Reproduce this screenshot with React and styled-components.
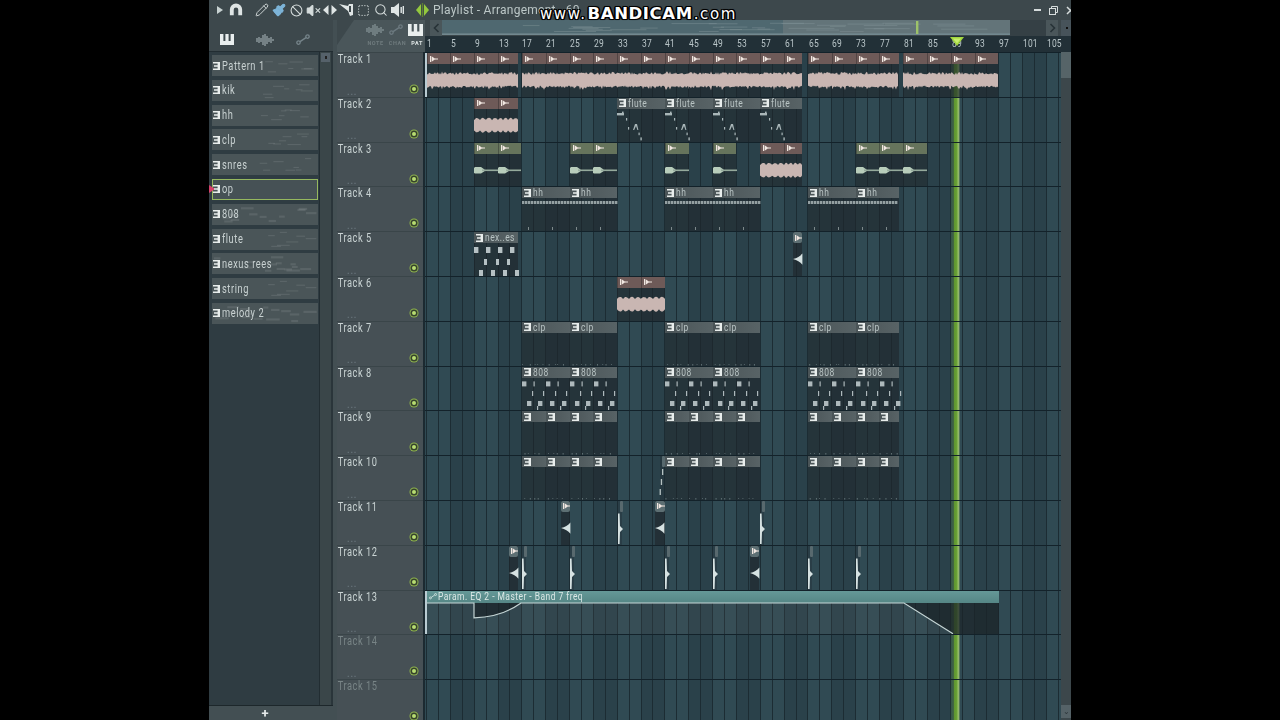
import React from "react";
import styled, { createGlobalStyle, css } from "styled-components";
import { Pencil, Paintbrush, Ban, VolumeX, SquareDashed, Search } from "lucide-react";

/* FL Studio's UI face is tall and narrow: Roboto squeezed horizontally */
const squeezed = css`
  font-family: Roboto, sans-serif;
  display: inline-block;
  white-space: nowrap;
  transform: scaleX(0.77);
  transform-origin: left center;
`;

const Global = createGlobalStyle`
  html, body { margin: 0; padding: 0; background: #000; }
  body { font-family: Roboto, "Liberation Sans", sans-serif; }
`;

const Stage = styled.div`
  position: relative; width: 1280px; height: 720px; background: #000;
  display: flex; justify-content: center; overflow: hidden;
`;
const Win = styled.div`
  width: 862px; height: 720px; background: #434f53; display: flex; flex-direction: column;
  overflow: hidden; filter: blur(0.35px); color: #c6d0d1;
`;
const TitleBar = styled.div`
  height: 20px; flex: none; display: flex; align-items: center; padding-left: 3px; background: #3d484c;
`;
const ToolSlot = styled.div`
  width: ${p => p.$w || 16.9}px; height: 20px; flex: none; display: flex; align-items: center; justify-content: center;
  margin-left: ${p => p.$ml || 0}px; color: ${p => p.$c || "#d5dcdc"};
`;
const Title = styled.div`
  margin-left: 3px; font-size: 12px; letter-spacing: 0.25px; color: #bcc7c7; white-space: nowrap; flex: 1;
`;
const WinBtns = styled.div`
  width: 41px; display: flex; align-items: center; justify-content: space-between; margin-right: -4px; color: #d6dcdc;
`;
const Main = styled.div`
  flex: 1; display: flex; min-height: 0;
`;

/* Picker */
const Picker = styled.div`
  width: 124px; flex: none; display: flex; flex-direction: column;
`;
const PickerTools = styled.div`
  height: 32px; flex: none; background: #3d484c; display: flex; align-items: center; gap: 22px;
  padding: 9px 0 0 11px; box-sizing: border-box; border-bottom: 1px solid #222d32;
`;
const PickerBody = styled.div`
  height: 653px; flex: none; display: flex; background: #2f3c42; border-bottom: 1px solid #1d272b;
`;
const PatList = styled.div`
  width: 111px; flex: none; padding: 3px 0 0 3px; box-sizing: border-box; display: flex; flex-direction: column; gap: 3.8px;
  border-right: 1px solid #222d32;
`;
const PatScroll = styled.div`
  flex: 1; background: #3a4649; border-right: 2px solid #2a353a; padding: 1px;
`;
const PatScrollBtn = styled.div`
  height: 9px; width: 9px; background: #55616a; display: flex; align-items: center; justify-content: center;
  &::after { content: ""; width: 2px; height: 3px; background: #222; }
`;
const PatItem = styled.div`
  position: relative; width: 106px; height: 21px; box-sizing: border-box; background: #4a5558;
  display: flex; align-items: center; gap: 2px;
  font-size: 12px; letter-spacing: 0.75px; color: #c9d2d2;
  border: 1px solid ${p => (p.$sel ? "#96b85f" : "transparent")};
  ${p => p.$sel && "background: #465155;"}
`;
const PatArt = styled.svg`
  position: absolute; inset: 0; width: 100%; height: 100%;
`;
const PatLabel = styled.span`
  position: relative; ${squeezed}
`;
const SelMark = styled.div`
  position: absolute; left: -4px; top: 5px; width: 0; height: 0;
  border-left: 6px solid #d6406a; border-top: 4px solid transparent; border-bottom: 4px solid transparent;
`;
const PickerFoot = styled.div`
  flex: 1; padding-right: 12px; display: flex; align-items: center; justify-content: center;
  color: #e4e9e9; font-size: 13px; font-weight: 700; line-height: 1;
`;
const Gap = styled.div`
  width: 4px; flex: none; background: #434f53;
`;

/* Right side */
const Right = styled.div`
  flex: 1; display: flex; flex-direction: column; min-width: 0;
`;
const TopBand = styled.div`
  height: 32px; flex: none; display: flex; background: #3d484c;
`;
const Tab = styled.div`
  width: 88px; flex: none; background: #4a565a; clip-path: polygon(0 100%, 0 78%, 17px 0, 100% 0, 100% 100%);
  display: flex; flex-direction: column; align-items: flex-end; padding: 2px 2px 0 0; box-sizing: border-box;
`;
const TabIcons = styled.div`
  display: flex; align-items: center; gap: 5px; height: 13px; padding-top: 1px;
`;
const TabLabels = styled.div`
  display: flex; gap: 5px; margin-top: 4px; font-size: 5.5px; font-weight: 700; letter-spacing: 0.6px; color: #6f7b7e; line-height: 7px;
`;
const TabOn = styled.span`
  color: #dfe6e6;
`;
const TopRight = styled.div`
  flex: 1; display: flex; flex-direction: column; min-width: 0;
`;
const MiniRow = styled.div`
  height: 16px; flex: none; display: flex; align-items: stretch; padding-left: 5px; background: #3c474b;
`;
const MiniBtn = styled.div`
  width: 12px; flex: none; background: #4a565a; color: #273237; display: flex; align-items: center; justify-content: center;
`;
const MiniBar = styled.svg`
  width: 568px; height: 15px; flex: none; display: block;
`;
const MiniSpace = styled.div`
  width: 36px; flex: none; background: #354045;
`;
const MiniEnd = styled.div`
  width: 11px; flex: none; margin-left: 3px; background: #47535a;
  display: flex; align-items: center; justify-content: center;
  &::after { content: ""; width: 2px; height: 2px; background: #111; }
`;
const RulerRow = styled.div`
  height: 16px; flex: none; display: flex; background: #223037;
`;
const Ruler = styled.div`
  flex: 1; display: flex; padding-left: 2px;
`;
const RulerNum = styled.div`
  ${squeezed}
  width: 23.85px; flex: none; font-size: 11px; line-height: 16px; color: #b9c5c8; letter-spacing: 0.2px;
`;
const RulerEnd = styled.div`
  width: 11px; flex: none; background: #4b585c;
`;
const PlayMark = styled.svg`
  position: absolute; left: 950px; top: 37px; width: 14px; height: 9px;
`;

const Body = styled.div`
  flex: 1; display: flex; min-height: 0;
`;
const HeadCol = styled.div`
  width: 86px; flex: none; overflow: hidden;
`;
const Divider = styled.div`
  width: 2px; flex: none; background: #1c2a31;
`;
const TrackHead = styled.div`
  height: 44.8px; box-sizing: border-box; border-top: 1px solid #3a4549; background: #465055;
  display: flex; flex-direction: column; justify-content: space-between; align-items: stretch;
`;
const TrackName = styled.div`
  ${squeezed}
  font-size: 12px; letter-spacing: 0.7px; line-height: 12px; padding-left: 1px; color: ${p => (p.$dim ? "#788486" : "#c9d3d3")};
`;
const TrackFoot = styled.div`
  display: flex; align-items: center; justify-content: space-between; padding: 0 7px 1.3px 10px;
`;
const Dots = styled.div`
  color: #67737a; font-size: 9px; font-weight: 700; letter-spacing: 0.8px; line-height: 8px; padding-top: 5px;
`;
const Led = styled.div`
  width: 4px; height: 4px; border-radius: 50%; background: #b7dc72; box-shadow: 0 0 0 1.5px #36432c, 0 0 0 2.5px #8fb34e;
`;
const LanesWrap = styled.div`
  position: relative; width: 636px; flex: none; overflow: hidden;
  background-color: #2e474f;
  background-image:
    repeating-linear-gradient(90deg, #1c2c33 0 1px, transparent 1px 11.92px),
    repeating-linear-gradient(90deg, #304a53 0 23.84px, #2a414a 23.84px 47.68px);
  background-position: 1px 0;
`;
const Lane = styled.div`
  position: relative; height: 44.8px; box-sizing: border-box; border-top: 1px solid #13222a;
`;
const Playhead = styled.div`
  position: absolute; left: 525px; top: 0; bottom: 0; width: 10px;
  background: linear-gradient(90deg, rgba(80,120,50,0) 0, rgba(80,125,50,.55) 35%, #5e9430 42%, #6aa236 70%, #a3c873 82%, rgba(120,170,80,.15) 100%);
`;
const StartBar = styled.div`
  position: absolute; left: 0; top: 0; bottom: 0; width: 2px; background: #b9cbd2;
`;
const Clip = styled.div`
  position: absolute; top: 0; bottom: 0; display: flex; flex-direction: column;
  background: ${p => (p.$stub ? "rgba(30,38,44,.3)" : "rgba(30,38,44,.62)")};
`;
const HEADS = { pink: "#6e5a58", green: "#66745c", grey: "#4e585b", tick: "#5d6f73", stub: "#58696e" };
const ClipHead = styled.div`
  height: 11px; flex: none; display: flex; align-items: center; gap: 2px; overflow: hidden;
  padding-left: ${p => (p.$k === "stub" ? 0 : 2)}px; font-size: 11px; letter-spacing: 0.6px; color: #b8c3c3;
  background: ${p => HEADS[p.$k]};
  ${p => p.$k === "grey" && "background: linear-gradient(90deg,#4a5457,#586366);"}
  ${p => (p.$k === "pink" || p.$k === "green") && "border-left: 1px solid rgba(30,30,30,.35);"}
  ${p => p.$k === "tick" && "border-radius: 2px;"}
  ${p => p.$k === "stub" && "width: 3px; margin-left: 2px; border-radius: 1px;"}
`;
const ClipName = styled.span`
  ${squeezed}
`;
const ClipBody = styled.svg`
  flex: 1; min-height: 0; width: 100%; display: block; overflow: visible;
`;
const AutoClip = styled.div`
  position: absolute; top: 0; bottom: 0; left: 2px; width: 572px; display: flex; flex-direction: column;
`;
const AutoHead = styled.div`
  height: 12px; flex: none; display: flex; align-items: center; gap: 1px; padding-left: 2px;
  font-size: 11px; letter-spacing: 0.6px; color: #dbe8e6;
  background: linear-gradient(180deg, #659897, #558685);
`;
const VScroll = styled.div`
  flex: 1; background: #3c474b; display: flex; flex-direction: column; justify-content: space-between;
`;
const VThumb = styled.div`
  height: 26px; background: #566468;
`;
const VBtn = styled.div`
  height: 13px; margin-bottom: 2px; background: #556267; color: #2c363a; font-size: 8px; line-height: 13px; text-align: center;
`;

const Watermark = styled.div`
  position: absolute; left: 540px; top: 4px; display: flex; align-items: baseline; white-space: nowrap;
  font-family: "DejaVu Sans", sans-serif; color: #fff; line-height: 20px;
  text-shadow: -1px -1px 0 #000, 1px -1px 0 #000, -1px 1px 0 #000, 1px 1px 0 #000, 0 0 2px #000, 1.5px 0 0 #000, -1.5px 0 0 #000;
`;
const WmSmall = styled.span`
  font-size: 15px; font-weight: 400; letter-spacing: 1.6px;
`;
const WmBig = styled.span`
  font-size: 16.5px; font-weight: 700; letter-spacing: 0.6px; margin: 0 1px;
`;

/* ---------- drawings ---------- */
const Piano = ({ s = 14, c = "#e9eeee" }) => (
  <svg width={s} height={s * 0.8} viewBox="0 0 14 11"><path fill={c} d="M0 0h3.4v7h2V0h3.2v7h2V0H14v11H0z" /></svg>
);
const WaveIcon = ({ c = "#8e9b9e" }) => (
  <svg width="18" height="12" viewBox="0 0 18 12" stroke={c} strokeWidth="1.4">
    {[[1, 2], [3, 3], [5, 2], [7, 5], [9, 6], [11, 4], [13, 2], [15, 3], [17, 1]].map(([x, h]) => (
      <line key={x} x1={x} x2={x} y1={6 - h} y2={6 + h} />
    ))}
  </svg>
);
const AutoIcon = ({ c = "#76848a", s = 14 }) => (
  <svg width={s} height={s * 0.8} viewBox="0 0 14 11" fill="none" stroke={c} strokeWidth="1.3" style={{ flex: "none" }}>
    <circle cx="2.5" cy="8.5" r="1.7" /><circle cx="11.5" cy="2.5" r="1.7" /><line x1="4" y1="7.5" x2="10" y2="3.5" />
  </svg>
);
const PatGlyph = ({ c = "#e8edec" }) => (
  <svg width="7" height="8" viewBox="0 0 7 8" style={{ flex: "none", position: "relative" }}><path fill={c} d="M0 0h7v8H0V6.4h4.6V4.8H1V3.2h3.6V1.6H0z" /></svg>
);
const AudioGlyph = () => (
  <svg width="8" height="6" viewBox="0 0 8 6" fill="#f0e6e0" style={{ flex: "none" }}><rect x="0" y="0" width="1.1" height="6" /><path d="M1.6 0.3 5.6 3 1.6 5.7z" /><rect x="5" y="2.5" width="3" height="1" /></svg>
);
const Magnet = () => (
  <svg width="14" height="14" viewBox="0 0 16 16" fill="#dfe5e5"><path d="M1 14V7.5a7 7 0 0 1 14 0V14h-4.4V7.6a2.6 2.6 0 0 0-5.2 0V14z" /></svg>
);
const Slip = () => (
  <svg width="14" height="10" viewBox="0 0 14 10" fill="#dfe5e5"><path d="M0 5 5.5 0v10zM14 5 8.5 0v10z" /><rect x="6.3" y="0" width="1.4" height="10" fill="#3d484c" /></svg>
);
const Slice = () => (
  <svg width="15" height="14" viewBox="0 0 15 14" fill="#dfe5e5"><path d="M0 1 9 3 10 1h4v11l-3 1-2-5z" /><rect x="10" y="3" width="2" height="6" fill="#3d484c" /></svg>
);
const Speaker = () => (
  <svg width="13" height="14" viewBox="0 0 13 14" fill="#dfe5e5"><path d="M0 4h3l5-4v14l-5-4H0z" /><rect x="9.5" y="4" width="1.4" height="6" /><rect x="11.6" y="3" width="1.4" height="8" /></svg>
);
const TitleIcon = () => (
  <svg width="13" height="14" viewBox="0 0 13 14" fill="#93c83e"><path d="M5 1v12L0 7z" /><path d="M8 1v12l5-6z" /><rect x="5.8" y="0" width="1.4" height="14" fill="#5d7f33" /></svg>
);
const Chevron = ({ dir }) => (
  <svg width="7" height="10" viewBox="0 0 7 10" fill="none" stroke="currentColor" strokeWidth="1.6">
    <path d={dir === "l" ? "M5.5 1 1.5 5l4 4" : "M1.5 1l4 4-4 4"} />
  </svg>
);
const WinIcons = () => (
  <WinBtns>
    <svg width="7" height="3" viewBox="0 0 7 3" fill="currentColor"><rect width="7" height="2" /></svg>
    <svg width="9" height="9" viewBox="0 0 9 9" fill="none" stroke="currentColor"><rect x="0.5" y="2.5" width="6" height="6" /><path d="M2.5 2.5v-2h6v6h-2" /></svg>
    <svg width="9" height="9" viewBox="0 0 9 9" stroke="currentColor" strokeWidth="1.5"><path d="M1 1l7 7M8 1 1 8" /></svg>
  </WinBtns>
);

function rng(seed) {
  let s = seed * 9301 + 49297;
  return () => {
    s = (s * 9301 + 49297) % 233280;
    return s / 233280;
  };
}

const Wave = ({ w, seed, cy = 16.2, amp = 7.5, c = "#c9b6b2" }) => {
  const r = rng(seed);
  const top = [];
  const bot = [];
  for (let x = 0; x <= w; x += 1) {
    const big = r() < 0.1 ? 2.4 : 0;
    top.push(`${x},${(cy - amp * (0.72 + r() * 0.34) - big * 0.4).toFixed(1)}`);
    bot.unshift(`${x},${(cy + amp * (0.72 + r() * 0.3) + big).toFixed(1)}`);
  }
  return <polygon fill={c} points={[...top, ...bot].join(" ")} />;
};
const Blobby = ({ w, seed, cy = 16.2, c = "#c9b6b2" }) => {
  const r = rng(seed);
  const top = [];
  const bot = [];
  for (let x = 0; x <= w; x += 1) {
    const a = 5 + 2 * Math.abs(Math.sin((x / w) * Math.PI * 2 * Math.max(1, Math.round(w / 12)))) + r() * 0.6;
    top.push(`${x},${(cy - a).toFixed(1)}`);
    bot.unshift(`${x},${(cy + a).toFixed(1)}`);
  }
  return <polygon fill={c} points={[...top, ...bot].join(" ")} />;
};
const Shot = ({ w }) => (
  <g>
    <polygon fill="#b8cdbb" points="0,14 1,13 7,13 10.5,15.4 10.5,17.2 7,19.4 1,19.6 0,19" />
    <rect x="8" y="15.5" width={w - 8} height="1.6" fill="#95aa9c" />
  </g>
);
const HhArt = ({ w }) => (
  <g fill="#94a0a2">
    {Array.from({ length: Math.floor(w / 3) }, (_, i) => <rect key={i} x={i * 3} y="3" width="2.4" height="3" />)}
    <rect x="6" y="29" width="1" height="3" fill="#7d898b" />
    <rect x="30" y="29" width="1" height="3" fill="#7d898b" />
  </g>
);
const NexArt = () => (
  <g fill="#b6c1c4">
    {[0, 12, 24, 36].map(x => <rect key={x} x={x} y="4" width="4.4" height="6" />)}
    {[10, 22, 33].map(x => <rect key={x} x={x} y="16" width="3" height="6" />)}
    {[5, 17, 29, 41].map(x => <rect key={x} x={x} y="27" width="4" height="6" />)}
  </g>
);
const Art808 = () => (
  <g fill="#aeb9bc">
    {[0, 24].map(x => <rect key={x} x={x} y="3.4" width="4.4" height="5" />)}
    {[11.5, 35.5].map(x => <rect key={x} x={x} y="3.4" width="1.2" height="5" />)}
    {[10, 21, 33, 44].map(x => <rect key={x} x={x} y="13" width="1.2" height="5" />)}
    {[5, 16, 28, 40].map(x => <rect key={x} x={x} y="23" width="4.4" height="5" />)}
    {[15, 38].map(x => <rect key={x} x={x} y="28" width="1.2" height="4" />)}
  </g>
);
const SparseTicks = ({ w, seed }) => {
  const r = rng(seed);
  return (
    <g fill="#65767a">
      {Array.from({ length: Math.floor(w / 5) }, (_, i) => (
        <rect key={i} x={i * 5 + r() * 3} y="31" width="0.9" height={r() > 0.5 ? 1.6 : 0.8} />
      ))}
    </g>
  );
};
const FluteArt = () => (
  <g fill="#a9b6b8">
    <rect x="0" y="4" width="7" height="2.4" />
    <rect x="5" y="2.6" width="1.6" height="3" />
    <rect x="9" y="9" width="1.2" height="2.6" />
    <rect x="11" y="18" width="1.2" height="2.6" />
    <path d="M16 21 18 15 20 15 21.4 21h-1L19 17l-1.8 4z" />
    <rect x="21.5" y="23.6" width="1.2" height="2.6" />
    <rect x="23.4" y="28.4" width="1.4" height="3" />
  </g>
);
const TriArt = () => <path d="M0 16 Q6 14.5 9.4 10.4V21.8Q6 17.5 0 16z" fill="#d6e2e2" />;
const SpikeArt = () => (
  <path d="M0 1.4 1.6 1.4 2 14 5 17 2 20 1.6 32 0 32z" fill="#d6e2e2" />
);
const DashArt = () => (
  <g fill="#b6c2c2">
    {[2, 12, 22].map((y, i) => <rect key={y} x={2 - i * 1.2} y={y} width="1.3" height="6" />)}
  </g>
);

const U = 5.96;
const bx = b => 1.5 + U * (b - 1);
const c = (kind, from, span, extra = {}) => ({ kind, from, span, ...extra });
const eightBars = (name, art) =>
  [17, 25, 41, 49, 65, 73].map(b => c("grey", b, b === 73 ? 7.3 : 8, { name, art }));
const fourBars = art =>
  [17, 21, 25, 29, 41, 45, 49, 53, 65, 69, 73, 77].map(b => c("grey", b, b === 77 ? 3.3 : 4, { art }));

const t1 = [];
[[1, 13, 3.4], [17, 61, 3], [65, 77, 3.2], [81, 93, 3.9]].forEach(([a, z, last]) => {
  for (let b = a; b <= z; b += 4) t1.push(c("pink", b, b === z ? last : 4, { art: "wave" }));
});

const TRACKS = [
  t1,
  [c("pink", 9, 4, { art: "blob" }), c("pink", 13, 3.4, { art: "blob" }),
    ...[33, 41, 49, 57].map(b => c("grey", b, b === 57 ? 7 : 8, { name: "flute", art: "flute" }))],
  [c("green", 9, 4, { art: "shot" }), c("green", 13, 3.9, { art: "shot" }),
    c("green", 25, 4, { art: "shot" }), c("green", 29, 4, { art: "shot" }),
    c("green", 41, 4, { art: "shot" }), c("green", 49, 4, { art: "shot" }),
    c("pink", 57, 4, { art: "blob" }), c("pink", 61, 3, { art: "blob" }),
    c("green", 73, 4, { art: "shot" }), c("green", 77, 4, { art: "shot" }), c("green", 81, 4, { art: "shot" })],
  eightBars("hh", "hh"),
  [c("grey", 9, 7.4, { name: "nex..es", art: "nex" }), c("tick", 62.5, 1.5, { art: "tri" })],
  [c("pink", 33, 4, { art: "blob" }), c("pink", 37, 4, { art: "blob" })],
  eightBars("clp", "ticks"),
  eightBars("808", "808"),
  fourBars("ticks"),
  [...fourBars("ticks"), c("stub", 40.2, 0.7, { art: "dash" })],
  [c("tick", 23.5, 1.55, { art: "tri" }), c("stub", 33.1, 0.7, { art: "spike" }), c("tick", 39.4, 1.6, { art: "tri" }), c("stub", 57, 0.7, { art: "spike" })],
  [c("tick", 14.8, 1.6, { art: "tri" }), c("stub", 17, 0.7, { art: "spike" }), c("stub", 25, 0.7, { art: "spike" }),
    c("stub", 41, 0.7, { art: "spike" }), c("stub", 49, 0.7, { art: "spike" }), c("tick", 55.2, 1.6, { art: "tri" }),
    c("stub", 65, 0.7, { art: "spike" }), c("stub", 73, 0.7, { art: "spike" })],
];

function renderArt(art, w, seed) {
  switch (art) {
    case "wave": return <Wave w={w} seed={seed} />;
    case "blob": return <Blobby w={w} seed={seed} />;
    case "shot": return <Shot w={w} />;
    case "hh": return <HhArt w={w} />;
    case "nex": return <NexArt />;
    case "808": return <Art808 />;
    case "ticks": return <SparseTicks w={w} seed={seed} />;
    case "flute": return <FluteArt />;
    case "tri": return <TriArt />;
    case "spike": return <SpikeArt />;
    case "dash": return <DashArt />;
    default: return null;
  }
}

const PlacedClip = ({ clip, seed }) => {
  const w = clip.span * U;
  const { kind, name, art } = clip;
  return (
    <Clip $stub={kind === "stub"} style={{ left: bx(clip.from), width: w }}>
      <ClipHead $k={kind}>
        {kind === "grey" && <PatGlyph />}
        {(kind === "pink" || kind === "green" || kind === "tick") && <AudioGlyph />}
        {name && <ClipName>{name}</ClipName>}
      </ClipHead>
      <ClipBody>{renderArt(art, Math.round(w), seed)}</ClipBody>
    </Clip>
  );
};

const PATTERNS = [
  { n: "Pattern 1", seed: 3 }, { n: "kik", seed: 5 }, { n: "hh", seed: 7 }, { n: "clp", seed: 11 },
  { n: "snres", seed: 13 }, { n: "op", seed: 0, sel: true }, { n: "808", seed: 17, rich: true },
  { n: "flute", seed: 19 }, { n: "nexus rees", seed: 23, rich: true }, { n: "string", seed: 19 }, { n: "melody 2", seed: 31, rich: true },
];

const MiniArt = ({ seed, rich }) => {
  if (!seed) return null;
  const r = rng(seed);
  const n = rich ? 14 : 7;
  return (
    <PatArt viewBox="0 0 106 21" preserveAspectRatio="none">
      {Array.from({ length: n }, (_, i) => (
        <rect key={i} x={(rich ? 0 : 45) + r() * (rich ? 95 : 50)} y={2 + r() * 16} width={5 + r() * 9} height={rich ? 2.4 : 1.2} fill="#fff" opacity={rich ? 0.09 : 0.1} />
      ))}
    </PatArt>
  );
};

const MiniMap = () => {
  const r = rng(41);
  return (
    <MiniBar viewBox="0 0 568 15">
      <rect width="341" height="15" fill="#4f6870" />
      <rect x="341" width="227" height="15" fill="#637479" />
      <rect y="13.4" width="568" height="1.6" fill="#72888f" />
      {Array.from({ length: 34 }, (_, i) => (
        <rect key={i} x={r() * 480 + 20} y={2 + r() * 10} width={10 + r() * 40} height="1" fill="#83959a" opacity="0.45" />
      ))}
      <rect x="474" y="1" width="2.4" height="13" fill="#9dc26a" />
    </MiniBar>
  );
};

export default function App() {
  const nums = [];
  for (let n = 1; n <= 105; n += 4) nums.push(n);
  const rows = [...TRACKS, [], [], []];
  return (
    <Stage>
      <Global />
      <Win>
        <TitleBar>
          <ToolSlot $w={16}><svg width="6" height="8" viewBox="0 0 6 8" fill="#c8d2d2"><path d="M0 0l6 4-6 4z" /></svg></ToolSlot>
          <ToolSlot $w={16}><Magnet /></ToolSlot>
          <ToolSlot $ml={10}><Pencil size={14} strokeWidth={1.6} /></ToolSlot>
          <ToolSlot $c="#7db4d8"><Paintbrush size={14} strokeWidth={1.8} fill="#7db4d8" /></ToolSlot>
          <ToolSlot><Ban size={13} strokeWidth={2} /></ToolSlot>
          <ToolSlot><VolumeX size={15} strokeWidth={1.8} fill="#d5dcdc" /></ToolSlot>
          <ToolSlot><Slip /></ToolSlot>
          <ToolSlot><Slice /></ToolSlot>
          <ToolSlot><SquareDashed size={13} strokeWidth={1.6} /></ToolSlot>
          <ToolSlot><Search size={14} strokeWidth={1.8} /></ToolSlot>
          <ToolSlot><Speaker /></ToolSlot>
          <ToolSlot $ml={8} $w={16}><TitleIcon /></ToolSlot>
          <Title>Playlist - Arrangement - 60</Title>
          <WinIcons />
        </TitleBar>
        <Main>
          <Picker>
            <PickerTools>
              <Piano />
              <WaveIcon />
              <AutoIcon />
            </PickerTools>
            <PickerBody>
              <PatList>
                {PATTERNS.map(p => (
                  <PatItem key={p.n} $sel={p.sel}>
                    <MiniArt seed={p.seed} rich={p.rich} />
                    {p.sel && <SelMark />}
                    <PatGlyph />
                    <PatLabel>{p.n}</PatLabel>
                  </PatItem>
                ))}
              </PatList>
              <PatScroll><PatScrollBtn /></PatScroll>
            </PickerBody>
            <PickerFoot>+</PickerFoot>
          </Picker>
          <Gap />
          <Right>
            <TopBand>
              <Tab>
                <TabIcons>
                  <WaveIcon c="#7f8d90" />
                  <AutoIcon c="#6d7a80" />
                  <Piano s={15} />
                </TabIcons>
                <TabLabels>
                  <span>NOTE</span><span>CHAN</span><TabOn>PAT</TabOn>
                </TabLabels>
              </Tab>
              <TopRight>
                <MiniRow>
                  <MiniBtn><Chevron dir="l" /></MiniBtn>
                  <MiniMap />
                  <MiniSpace />
                  <MiniBtn><Chevron dir="r" /></MiniBtn>
                  <MiniEnd />
                </MiniRow>
                <RulerRow>
                  <Ruler>
                    {nums.map(n => <RulerNum key={n}>{n}</RulerNum>)}
                  </Ruler>
                  <RulerEnd />
                </RulerRow>
              </TopRight>
            </TopBand>
            <Body>
              <HeadCol>
                {rows.map((_, i) => (
                  <TrackHead key={i}>
                    <TrackName $dim={i >= 13}>Track {i + 1}</TrackName>
                    <TrackFoot><Dots>...</Dots><Led /></TrackFoot>
                  </TrackHead>
                ))}
              </HeadCol>
              <Divider />
              <LanesWrap>
                <Playhead />
                {rows.map((clips, i) => (
                  <Lane key={i}>
                    {(i === 0 || i === 12) && <StartBar />}
                    {clips.map((cl, j) => <PlacedClip key={j} clip={cl} seed={i * 31 + j * 7 + 1} />)}
                    {i === 12 && (
                      <AutoClip>
                        <AutoHead><AutoIcon c="#e2efec" s={8} /><ClipName>Param. EQ 2 - Master - Band 7 freq</ClipName></AutoHead>
                        <ClipBody viewBox="0 0 572 32" preserveAspectRatio="none">
                          <path d="M0 0H47V15Q75 14 94 0H477L526 31V32H0z" fill="rgba(100,108,108,.14)" />
                          <path d="M47 0V15Q75 14 94 0zM477 0 526 31V32H572V0z" fill="rgba(28,36,40,.72)" />
                          <path d="M0 0H47V15Q75 14 94 0H477L526 31" fill="none" stroke="#c5d5d5" strokeWidth="1.2" />
                        </ClipBody>
                      </AutoClip>
                    )}
                  </Lane>
                ))}
              </LanesWrap>
              <VScroll>
                <VThumb />
                <VBtn>⌄</VBtn>
              </VScroll>
            </Body>
          </Right>
        </Main>
      </Win>
      <PlayMark viewBox="0 0 14 9"><path d="M0 0H14L7 9z" fill="#a2d63f" /><path d="M3 1.6H11L7 6.6z" fill="#c7ee6d" /></PlayMark>
      <Watermark>
        <WmSmall>www.</WmSmall><WmBig>BANDICAM</WmBig><WmSmall>.com</WmSmall>
      </Watermark>
    </Stage>
  );
}
